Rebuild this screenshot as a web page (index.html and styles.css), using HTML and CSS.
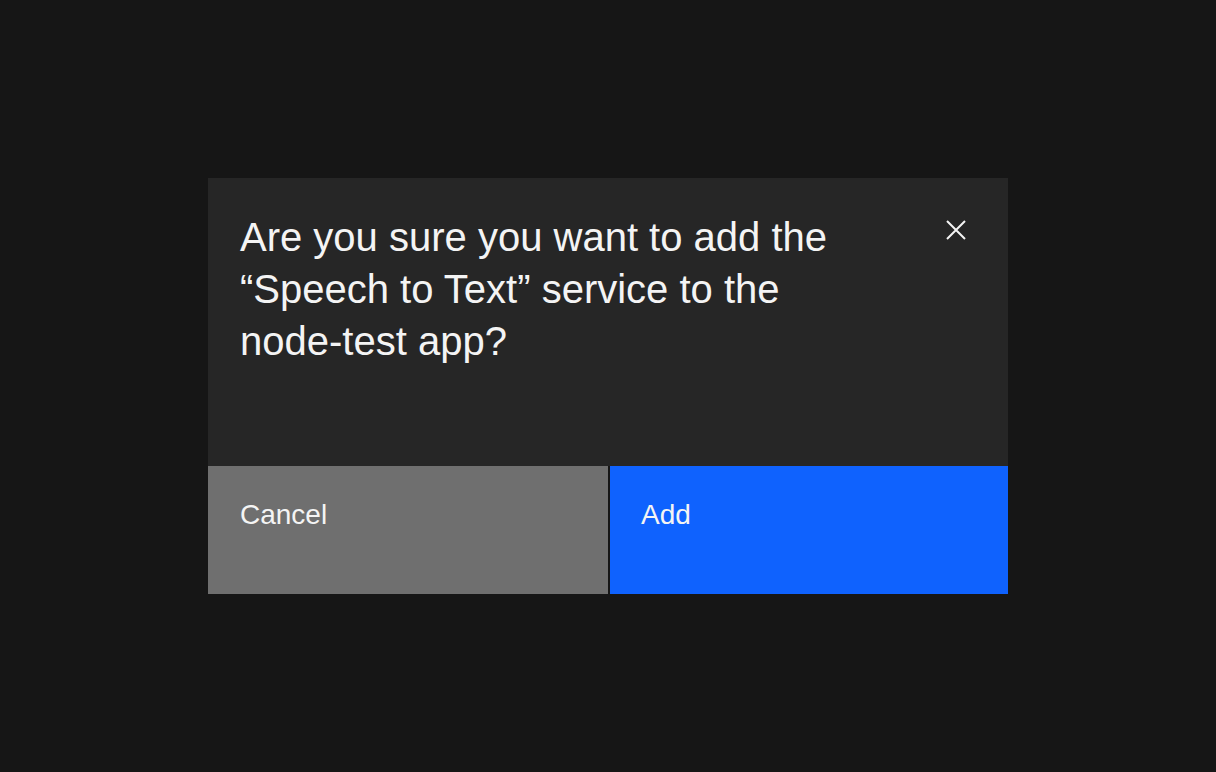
FILE: index.html
```html
<!DOCTYPE html>
<html lang="en">
<head>
	<meta charset="UTF-8">
	<title>Add service</title>
	<link rel="stylesheet" href="styles.css">
</head>
<body>
<div class="modal">
	<div class="modal-head">
		<h2 class="modal-title">Are you sure you want to add the “Speech to Text” service to the node-test app?</h2>
		<button class="modal-close" aria-label="Close">
			<svg width="20" height="20" viewBox="0 0 20 20"><path d="M1 1L19 19M19 1L1 19" stroke="#f4f4f4" stroke-width="2" fill="none"/></svg>
		</button>
	</div>
	<div class="modal-foot">
		<button class="btn btn-cancel">Cancel</button>
		<button class="btn btn-add">Add</button>
	</div>
</div>
</body>
</html>
```
FILE: styles.css
```css
*{margin:0;padding:0;box-sizing:border-box;}
html,body{height:100%;}
body{
	background-color:#161616;
	font-family:"Liberation Sans",Arial,sans-serif;
	color:#f4f4f4;
	display:flex;
	justify-content:center;
	padding-top:178px;
}
.modal{
	width:800px;
	height:416px;
	display:flex;
	flex-direction:column;
}
.modal-head{
	position:relative;
	flex:1;
	background-color:#262626;
	padding:33px 150px 0 32px;
}
.modal-title{
	font-size:40px;
	line-height:52px;
	font-weight:normal;
}
.modal-close{
	position:absolute;
	top:42px;
	right:42px;
	width:20px;
	height:20px;
	border:0;
	background:none;
	display:block;
}
.modal-close svg{display:block;}
.modal-foot{
	display:grid;
	grid-template-columns:400px 398px;
	gap:2px;
	height:128px;
}
.btn{
	border:0;
	font-family:inherit;
	font-size:28px;
	line-height:36px;
	color:#f4f4f4;
	text-align:left;
	padding:31px 32px 0;
	align-self:stretch;
	display:flex;
	align-items:flex-start;
}
.btn-cancel{background-color:#6f6f6f;}
.btn-add{background-color:#0f62fe;padding-left:31px;}
```
